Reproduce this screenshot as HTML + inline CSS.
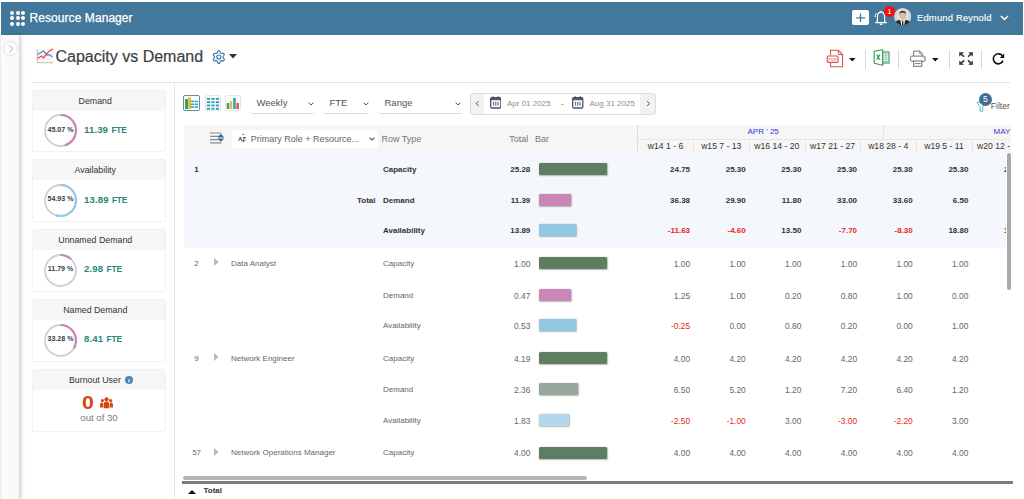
<!DOCTYPE html><html><head><meta charset="utf-8"><style>
*{box-sizing:border-box;margin:0;padding:0}
html,body{width:1024px;height:499px;overflow:hidden;background:#fff;font-family:"Liberation Sans",sans-serif;color:#333}
.a{position:absolute}
.t{position:absolute;white-space:nowrap;line-height:1}
#top{left:1px;top:2px;width:1022px;height:33px;background:#41789b}
#side{left:0;top:35px;width:19px;height:464px;background:#fafafa;border-left:1px solid #ececec;box-shadow:1.5px 0 4px rgba(0,0,0,.2)}
.card{position:absolute;left:33px;width:132px;height:60.5px;background:#fff;box-shadow:0 0 1.5px rgba(0,0,0,.2)}
.card .hd{position:absolute;left:0;top:0;width:100%;height:20px;background:#f6f6f6;font-size:8.8px;color:#333;text-align:center;line-height:21px;padding-right:7.5px}
.ring{position:absolute;left:11px;top:23.8px;width:33px;height:33px}
.pct{position:absolute;left:11px;top:36.1px;width:33px;text-align:center;font-size:7.1px;font-weight:700;color:#3a3a3a;line-height:1;white-space:nowrap}
.big{position:absolute;left:51px;top:34.2px;font-size:9.6px;font-weight:700;color:#2a8676;line-height:1;white-space:nowrap;letter-spacing:.12px}
.big small{font-size:8.4px;margin-left:3.3px;letter-spacing:-.15px}
.dd{position:absolute;height:20px;border-bottom:1px solid #e2d6d8;border-radius:0 0 3px 3px;font-size:10px;color:#555;line-height:20px}
.num{font-size:8px;color:#666}
</style></head><body>
<div id="top" class="a"></div>
<div class="a" style="left:10.0px;top:10.6px;width:4.2px;height:4.2px;border-radius:50%;background:#fff"></div>
<div class="a" style="left:15.6px;top:10.6px;width:4.2px;height:4.2px;border-radius:50%;background:#fff"></div>
<div class="a" style="left:21.2px;top:10.6px;width:4.2px;height:4.2px;border-radius:50%;background:#fff"></div>
<div class="a" style="left:10.0px;top:16.2px;width:4.2px;height:4.2px;border-radius:50%;background:#fff"></div>
<div class="a" style="left:15.6px;top:16.2px;width:4.2px;height:4.2px;border-radius:50%;background:#fff"></div>
<div class="a" style="left:21.2px;top:16.2px;width:4.2px;height:4.2px;border-radius:50%;background:#fff"></div>
<div class="a" style="left:10.0px;top:21.8px;width:4.2px;height:4.2px;border-radius:50%;background:#fff"></div>
<div class="a" style="left:15.6px;top:21.8px;width:4.2px;height:4.2px;border-radius:50%;background:#fff"></div>
<div class="a" style="left:21.2px;top:21.8px;width:4.2px;height:4.2px;border-radius:50%;background:#fff"></div>
<div class="t" style="left:29.5px;top:12.4px;font-size:12px;color:#fff;letter-spacing:.07px;-webkit-text-stroke:.25px #fff">Resource Manager</div>
<div class="a" style="left:852px;top:9.6px;width:17px;height:15.5px;background:#fff;border-radius:2px"></div>
<svg class="a" style="left:852px;top:9.6px" width="17" height="16"><path d="M8.5 3.6v8.5M4.2 7.8h8.9" stroke="#41789b" stroke-width="1.3"/></svg>
<svg class="a" style="left:872.5px;top:9.5px" width="16" height="16" viewBox="0 0 16 16"><path d="M4.4 12V7.4C4.4 4.2 6 2.2 8 2.2S11.6 4.2 11.6 7.4V12L13.4 12.6H2.6z" fill="none" stroke="#fff" stroke-width="1.2" stroke-linejoin="round"/><path d="M7 13.4a1 1 0 0 0 2 0" fill="none" stroke="#fff" stroke-width="1.1"/><path d="M8 .8v1.4" stroke="#fff" stroke-width="1.1"/><path d="M2 7Q2.1 4.6 3.4 3" stroke="#fff" stroke-width="1" fill="none"/></svg>
<div class="a" style="left:883.8px;top:5.9px;width:11.2px;height:11.2px;border-radius:50%;background:#f80d16"></div>
<div class="t" style="left:884px;top:7.5px;width:11px;text-align:center;font-size:8px;color:#fff">1</div>
<svg class="a" style="left:893.9px;top:8.1px" width="17.4" height="17.4" viewBox="0 0 18 18"><defs><clipPath id="av"><circle cx="9" cy="9" r="9"/></clipPath><radialGradient id="avg" cx=".5" cy=".4" r=".6"><stop offset="0" stop-color="#f2f2f2"/><stop offset="1" stop-color="#c8c8c8"/></radialGradient></defs><g clip-path="url(#av)"><rect width="18" height="18" fill="url(#avg)"/><path d="M5.8 7.5Q5.6 11 9 12q3.4-1 3.2-4.5z" fill="#d9b8a8"/><ellipse cx="9" cy="7.6" rx="3.2" ry="3.9" fill="#dcbcad"/><path d="M5.6 7Q5.2 2.9 9 2.8q3.8.1 3.4 4.2q-.4-2.2-3.4-2.3q-3 .1-3.4 2.3z" fill="#3c3634"/><path d="M0 18q.6-4.6 4.8-5.6L9 13.4l4.2-1Q17.4 13.4 18 18z" fill="#26272b"/><path d="M6.6 12.3L9 13.2l2.4-.9L10.6 18H7.4z" fill="#f6f6f6"/><path d="M8.5 13.3h1l.4 4.7H8.1z" fill="#1a1a1a"/></g></svg>
<div class="t" style="left:917px;top:13.1px;font-size:9.4px;color:#fff;letter-spacing:0.2px;-webkit-text-stroke:.15px #fff">Edmund Reynold</div>
<svg class="a" style="left:1000px;top:14.5px" width="9" height="6"><path d="M1 1l3.5 3.5L8 1" fill="none" stroke="#fff" stroke-width="1.5"/></svg>
<div id="side" class="a"></div>
<div class="a" style="left:3.6px;top:41.8px;width:13.6px;height:13.6px;border-radius:50%;background:#fdfdfd;box-shadow:0 0 2px rgba(0,0,0,.25)"></div>
<svg class="a" style="left:3.6px;top:41.8px" width="14" height="14"><path d="M5.4 3.2l3.4 3.6-3.4 3.6" fill="none" stroke="#a4adb8" stroke-width="1"/></svg>
<svg class="a" style="left:36px;top:48px" width="18" height="16" viewBox="0 0 18 16"><rect x="1" y="1" width="16" height="14" fill="#fbecec" opacity=".5"/><path d="M1.3 1v13.6H17" fill="none" stroke="#c9c9c9" stroke-width="1.2"/><path d="M1.5 6.5L7.5 3 11 7l2.5-.3L16.5 9" fill="none" stroke="#4a8bd6" stroke-width="1.2"/><path d="M1.5 10.5L5.5 8 7.5 10 13 3.2 17 1" fill="none" stroke="#e8484a" stroke-width="1.2"/></svg>
<div class="t" style="left:55.5px;top:48.8px;font-size:16px;color:#3a3f44;-webkit-text-stroke:.2px #3a3f44">Capacity vs Demand</div>
<svg class="a" style="left:211.8px;top:49.6px" width="13.6" height="14.2" viewBox="0 0 24 24" preserveAspectRatio="none"><path d="M8.87 5.29 L10.52 1.50 L13.48 1.50 L15.13 5.29 L16.24 5.94 L20.35 5.47 L21.83 8.03 L19.37 11.36 L19.37 12.64 L21.83 15.97 L20.35 18.53 L16.24 18.06 L15.13 18.71 L13.48 22.50 L10.52 22.50 L8.87 18.71 L7.76 18.06 L3.65 18.53 L2.17 15.97 L4.63 12.64 L4.63 11.36 L2.17 8.03 L3.65 5.47 L7.76 5.94z" fill="none" stroke="#3b7cab" stroke-width="2" stroke-linejoin="round"/><circle cx="12" cy="12" r="3.5" fill="none" stroke="#3b7cab" stroke-width="2"/></svg>
<svg class="a" style="left:229px;top:53.5px" width="8" height="5"><path d="M0 0h8L4 4.5z" fill="#333"/></svg>
<svg class="a" style="left:826px;top:49px" width="18" height="19" viewBox="0 0 18 19"><path d="M4.5 6.5V1.3h7.8l4.3 4.3v12.2H4.5v-4.2" fill="none" stroke="#d9534f" stroke-width="1.1"/><path d="M12.3 1.3v4.3h4.3" fill="none" stroke="#d9534f" stroke-width="1"/><rect x="1.2" y="7" width="10.8" height="6.4" rx="1" fill="#fff" stroke="#d9534f" stroke-width="1.1"/><text x="6.6" y="11.8" font-size="4.2" font-family="Liberation Sans" fill="#d9534f" text-anchor="middle" letter-spacing=".1">PDF</text></svg>
<svg class="a" style="left:849.2px;top:57.8px" width="8" height="5"><path d="M0 0h6.6L3.3 3.4z" fill="#111"/></svg>
<div class="a" style="left:865px;top:50px;width:1px;height:19px;background:#d8d8d8"></div>
<svg class="a" style="left:872.5px;top:49.3px" width="18" height="17" viewBox="0 0 18 17"><path d="M1.2 2.2L9.8 .8v15.4L1.2 14.2z" fill="#fff" stroke="#2f9a5a" stroke-width="1.1" stroke-linejoin="round"/><rect x="9.8" y="3" width="6.2" height="11" fill="#fff" stroke="#2f9a5a" stroke-width="1.1"/><path d="M9.8 4.9h6.2M9.8 6.8h6.2M9.8 8.7h6.2M9.8 10.6h6.2M9.8 12.5h6.2M12.9 3v11" stroke="#7cc49a" stroke-width=".7"/><path d="M3.8 5.6l3 5.2M6.8 5.6l-3 5.2" stroke="#2f9a5a" stroke-width="1.2"/></svg>
<div class="a" style="left:898px;top:50px;width:1px;height:19px;background:#d8d8d8"></div>
<svg class="a" style="left:909px;top:49.5px" width="18" height="17" viewBox="0 0 18 17"><path d="M4.7 6V1.1h6l2.6 2.6V6" fill="#fff" stroke="#707070" stroke-width="1"/><path d="M10.7 1.1v2.6h2.6" fill="none" stroke="#707070" stroke-width=".8"/><rect x="1.6" y="6.1" width="14.4" height="5.3" rx="1.2" fill="#fff" stroke="#707070" stroke-width="1"/><rect x="4.7" y="11" width="8.1" height="5.3" fill="#fff" stroke="#707070" stroke-width="1"/><path d="M6 13.6h5.5" stroke="#777" stroke-width="1"/><path d="M13.6 7.6h1" stroke="#aaa" stroke-width=".8"/></svg>
<svg class="a" style="left:932px;top:57.8px" width="8" height="5"><path d="M0 0h6.6L3.3 3.4z" fill="#111"/></svg>
<div class="a" style="left:948.5px;top:50px;width:1px;height:19px;background:#d8d8d8"></div>
<svg class="a" style="left:958.7px;top:51.8px" width="14.2" height="13.2" viewBox="0 0 14.4 14.4" preserveAspectRatio="none"><g fill="#3a3a3a" stroke="#3a3a3a"><path d="M.5.5h4L.5 4.5z" stroke-width=".6"/><path d="M2 2l3.2 3.2" stroke-width="1.7"/><path d="M13.9.5h-4l4 4z" stroke-width=".6"/><path d="M12.4 2L9.2 5.2" stroke-width="1.7"/><path d="M.5 13.9h4l-4-4z" stroke-width=".6"/><path d="M2 12.4l3.2-3.2" stroke-width="1.7"/><path d="M13.9 13.9h-4l4-4z" stroke-width=".6"/><path d="M12.4 12.4L9.2 9.2" stroke-width="1.7"/></g></svg>
<div class="a" style="left:981px;top:50px;width:1px;height:19px;background:#d8d8d8"></div>
<svg class="a" style="left:991.5px;top:51.6px" width="13" height="13" viewBox="0 0 13 13"><path d="M10.6 4.2A5 5 0 1 0 11 8.6" fill="none" stroke="#111" stroke-width="1.6"/><path d="M12.2 1.6V6H7.8z" fill="#111"/></svg>
<div class="a" style="left:32px;top:82px;width:977.5px;height:1px;background:#e4e4e4"></div>
<div class="a" style="left:174px;top:83px;width:1px;height:416px;background:#e6e6e6"></div>
<div class="card" style="top:90.5px"><div class="hd">Demand</div><svg class="ring" viewBox="0 0 33 33"><circle cx="16.5" cy="16.5" r="15.5" fill="none" stroke="#cfcfcf" stroke-width="1.8"/><circle cx="16.5" cy="16.5" r="15.5" fill="none" stroke="#c986b9" stroke-width="2.2" stroke-dasharray="43.89 97.39" transform="rotate(-90 16.5 16.5)"/></svg><div class="pct">45.07 %</div><div class="big">11.39<small>FTE</small></div></div>
<div class="card" style="top:160.4px"><div class="hd">Availability</div><svg class="ring" viewBox="0 0 33 33"><circle cx="16.5" cy="16.5" r="15.5" fill="none" stroke="#cfcfcf" stroke-width="1.8"/><circle cx="16.5" cy="16.5" r="15.5" fill="none" stroke="#95c8e3" stroke-width="2.2" stroke-dasharray="53.50 97.39" transform="rotate(-90 16.5 16.5)"/></svg><div class="pct">54.93 %</div><div class="big">13.89<small>FTE</small></div></div>
<div class="card" style="top:230.3px"><div class="hd">Unnamed Demand</div><svg class="ring" viewBox="0 0 33 33"><circle cx="16.5" cy="16.5" r="15.5" fill="none" stroke="#cfcfcf" stroke-width="1.8"/><circle cx="16.5" cy="16.5" r="15.5" fill="none" stroke="#c986b9" stroke-width="2.2" stroke-dasharray="11.48 97.39" transform="rotate(-90 16.5 16.5)"/></svg><div class="pct">11.79 %</div><div class="big">2.98<small>FTE</small></div></div>
<div class="card" style="top:300.2px"><div class="hd">Named Demand</div><svg class="ring" viewBox="0 0 33 33"><circle cx="16.5" cy="16.5" r="15.5" fill="none" stroke="#cfcfcf" stroke-width="1.8"/><circle cx="16.5" cy="16.5" r="15.5" fill="none" stroke="#c986b9" stroke-width="2.2" stroke-dasharray="32.41 97.39" transform="rotate(-90 16.5 16.5)"/></svg><div class="pct">33.28 %</div><div class="big">8.41<small>FTE</small></div></div>
<div class="card" style="top:370px"><div class="hd" style="padding:0"></div><div class="t" style="left:36px;top:5.8px;font-size:8.8px;color:#333">Burnout User</div><svg class="a" style="left:92px;top:5.5px" width="8" height="8" viewBox="0 0 8 8"><circle cx="4" cy="4" r="4" fill="#4a86b5"/><path d="M4.3 3.3L3.6 6.3M4.5 1.9v.3" stroke="#fff" stroke-width="1.1"/></svg><div class="t" style="left:49px;top:23.1px;font-size:19px;font-weight:700;color:#d4470f;transform:scaleX(1.12);transform-origin:left">0</div><svg class="a" style="left:66.8px;top:27px" width="13" height="11.5" viewBox="0 0 13 11.5"><g fill="#d4470f"><circle cx="6.5" cy="2.3" r="2.1"/><path d="M3.6 11.2V7.4a2.9 2.9 0 0 1 5.8 0v3.8z"/><circle cx="2.4" cy="3.6" r="1.6"/><path d="M0 10.6V7.6A2.2 2.2 0 0 1 2.6 5.6Q3 6.3 3 7.4v3.2z"/><circle cx="10.6" cy="3.6" r="1.6"/><path d="M13 10.6V7.6a2.2 2.2 0 0 0-2.6-2Q10 6.3 10 7.4v3.2z"/></g></svg><div class="t" style="left:0;top:42.7px;width:132px;text-align:center;font-size:9.6px;color:#7a7a7a">out of 30</div></div>
<div class="a" style="left:183px;top:95px;width:17px;height:16px;border:1.3px solid #5a8db0;border-radius:2px;background:#fff"></div>
<svg class="a" style="left:183px;top:95px" width="17" height="16" viewBox="0 0 17 16"><rect x="2" y="4" width="3" height="10" fill="#43a05a"/><rect x="5" y="2.4" width="3" height="11.6" fill="#f3bd3a"/><g fill="#35a8be"><rect x="7.6" y="5.6" width="3.4" height="1.6"/><rect x="11.6" y="5.6" width="3.4" height="1.6"/><rect x="7.6" y="8.5" width="3.4" height="1.6"/><rect x="11.6" y="8.5" width="3.4" height="1.6"/><rect x="7.6" y="11.3" width="3.4" height="1.6"/><rect x="11.6" y="11.3" width="3.4" height="1.6"/></g></svg>
<div class="a" style="left:204.5px;top:95px;width:16px;height:16px;border:1px solid #e6e6e6;border-radius:2px;background:#fff"></div>
<svg class="a" style="left:204.5px;top:95px" width="16" height="16" viewBox="0 0 16 16"><g fill="#2ea3b8"><rect x="1.8" y="2.9" width="3.3" height="1.9"/><rect x="6.3" y="2.9" width="3.3" height="1.9"/><rect x="10.8" y="2.9" width="3.3" height="1.9"/><rect x="1.8" y="6.2" width="3.3" height="1.9"/><rect x="6.3" y="6.2" width="3.3" height="1.9"/><rect x="10.8" y="6.2" width="3.3" height="1.9"/><rect x="1.8" y="9.5" width="3.3" height="1.9"/><rect x="6.3" y="9.5" width="3.3" height="1.9"/><rect x="10.8" y="9.5" width="3.3" height="1.9"/><rect x="1.8" y="12.8" width="3.3" height="1.9"/><rect x="6.3" y="12.8" width="3.3" height="1.9"/><rect x="10.8" y="12.8" width="3.3" height="1.9"/></g></svg>
<div class="a" style="left:225px;top:95px;width:16px;height:16px;border:1px solid #e6e6e6;border-radius:2px;background:#fff"></div>
<svg class="a" style="left:225px;top:95px" width="16" height="16" viewBox="0 0 16 16"><rect x="1.8" y="8" width="2.5" height="6" fill="#43a05a"/><rect x="4.8" y="6" width="2.5" height="8" fill="#f3bd3a"/><rect x="8.1" y="2.9" width="2.7" height="11.1" fill="#35a8be"/><rect x="11.4" y="7.9" width="2.6" height="6.1" fill="#e4574f"/></svg>
<div class="dd" style="left:250px;top:94px;width:64px"></div>
<div class="t" style="left:256.5px;top:98.1px;font-size:9.5px;color:#555">Weekly</div>
<svg class="a" style="left:308px;top:101.8px" width="6" height="4"><path d="M.6.6l2.4 2.4L5.4.6" fill="none" stroke="#555" stroke-width="1"/></svg>
<div class="dd" style="left:323px;top:94px;width:46px"></div>
<div class="t" style="left:329.5px;top:98.1px;font-size:9.5px;color:#555">FTE</div>
<svg class="a" style="left:362.6px;top:101.8px" width="6" height="4"><path d="M.6.6l2.4 2.4L5.4.6" fill="none" stroke="#555" stroke-width="1"/></svg>
<div class="dd" style="left:378px;top:94px;width:85px"></div>
<div class="t" style="left:384.5px;top:98.1px;font-size:9.5px;color:#555">Range</div>
<svg class="a" style="left:454.8px;top:101.8px" width="6" height="4"><path d="M.6.6l2.4 2.4L5.4.6" fill="none" stroke="#555" stroke-width="1"/></svg>
<div class="a" style="left:469.5px;top:93px;width:186px;height:22px;border:1px solid #dcdcdc;border-radius:3px;background:#f2f2f2"></div>
<div class="a" style="left:484px;top:94px;width:156.4px;height:20px;background:#fff"></div>
<svg class="a" style="left:475px;top:100px" width="5" height="7"><path d="M3.6 1.2L1.2 3.6l2.4 2.4" fill="none" stroke="#3d4a5c" stroke-width="1"/></svg>
<svg class="a" style="left:645.5px;top:100px" width="5" height="7"><path d="M1.2 1.2l2.4 2.4L1.2 6" fill="none" stroke="#3d4a5c" stroke-width="1"/></svg>
<svg class="a" style="left:489.5px;top:96.4px" width="11.5" height="12.5" viewBox="0 0 11.5 12.5"><rect x=".7" y="1.6" width="10.1" height="10.4" rx="1.3" fill="#fff" stroke="#4b5563" stroke-width="1.3"/><rect x=".7" y="1.6" width="10.1" height="2.6" fill="#4b5563"/><path d="M3.2 .3v2.3M8.3 .3v2.3" stroke="#4b5563" stroke-width="1.2"/><g fill="#6b7280"><rect x="2.9" y="5.8" width="1.2" height="3.8"/><rect x="5.15" y="5.8" width="1.2" height="3.8"/><rect x="7.4" y="5.8" width="1.2" height="3.8"/></g></svg>
<svg class="a" style="left:572px;top:96.4px" width="11.5" height="12.5" viewBox="0 0 11.5 12.5"><rect x=".7" y="1.6" width="10.1" height="10.4" rx="1.3" fill="#fff" stroke="#4b5563" stroke-width="1.3"/><rect x=".7" y="1.6" width="10.1" height="2.6" fill="#4b5563"/><path d="M3.2 .3v2.3M8.3 .3v2.3" stroke="#4b5563" stroke-width="1.2"/><g fill="#6b7280"><rect x="2.9" y="5.8" width="1.2" height="3.8"/><rect x="5.15" y="5.8" width="1.2" height="3.8"/><rect x="7.4" y="5.8" width="1.2" height="3.8"/></g></svg>
<div class="t" style="left:507px;top:99.5px;font-size:8px;color:#8d8d8d">Apr 01 2025</div>
<div class="t" style="left:561px;top:99.5px;font-size:8px;font-weight:700;color:#999">-</div>
<div class="t" style="left:589.5px;top:99.5px;font-size:8px;color:#8d8d8d">Aug 31 2025</div>
<svg class="a" style="left:976px;top:101px" width="11" height="11" viewBox="0 0 11 11"><path d="M1 1.2h9L6.7 6v4.3H4.1V6z" fill="#fff" stroke="#5cc2c4" stroke-width="1"/></svg>
<div class="a" style="left:979px;top:92.6px;width:13px;height:13px;border-radius:50%;background:#3d6f94"></div>
<div class="t" style="left:979px;top:95px;width:13px;text-align:center;font-size:8.6px;font-weight:400;color:#fff">5</div>
<div class="t" style="left:990.8px;top:101.6px;font-size:8.6px;color:#555">Filter</div>
<div class="a" style="left:184px;top:125px;width:827px;height:27px;background:#f6f6f6"></div>
<svg class="a" style="left:209px;top:131px" width="17" height="13" viewBox="0 0 17 13"><path d="M1 2h11.5M1 5.3h11.5M1 8.6h11.5M1 11.9h11.5" stroke="#8a8a8a" stroke-width="1.2"/><path d="M11.9 2.8L8.6 6.4h6.6z" fill="#2f6a9a"/><path d="M11.9 10.8L8.6 7.4h6.6z" fill="#2f6a9a"/></svg>
<div class="a" style="left:232px;top:130px;width:146px;height:18px;background:#fff;border-radius:2px"></div>
<svg class="a" style="left:237.5px;top:132.5px" width="10" height="10" viewBox="0 0 10 10"><text x="0.3" y="7.6" font-size="5.6" font-family="Liberation Sans" font-weight="700" fill="#333">A</text><text x="4.4" y="7.6" font-size="5.6" font-family="Liberation Sans" font-weight="700" fill="#333">Z</text><path d="M5.2 .4l1.1 1.3H4.1z" fill="#333"/><path d="M5.2 9.6l1.1-1.3H4.1z" fill="#333"/></svg>
<div class="t" style="left:250.8px;top:135px;font-size:9px;color:#666">Primary Role + Resource...</div>
<svg class="a" style="left:368.5px;top:137px" width="6" height="4"><path d="M.6.6l2.4 2.4L5.4.6" fill="none" stroke="#555" stroke-width="1.1"/></svg>
<div class="t" style="left:381.5px;top:135px;font-size:9px;color:#777">Row Type</div>
<div class="t" style="left:509.3px;top:135px;font-size:9px;color:#777">Total</div>
<div class="t" style="left:535px;top:135px;font-size:9px;color:#777">Bar</div>
<div class="a" style="left:637px;top:125px;width:1px;height:27px;background:#dedede"></div>
<div class="a" style="left:638px;top:138.5px;width:373px;height:1px;background:#e6e6e6"></div>
<div class="a" style="left:883px;top:125px;width:1px;height:14px;background:#e6e6e6"></div>
<div class="t" style="left:747.5px;top:127.5px;font-size:8px;color:#3434e0">APR &#39; 25</div>
<div class="t" style="left:993.5px;top:127.5px;font-size:8px;color:#3434e0">MAY</div>
<div class="a" style="left:638px;top:139px;width:373px;height:13px;overflow:hidden">
<div class="t" style="left:-0.3px;top:2.7px;width:55.67px;text-align:center;font-size:8.6px;color:#333">w14 1 - 6</div>
<div class="a" style="left:55.4px;top:0;width:1px;height:13px;background:#e6e6e6"></div>
<div class="t" style="left:55.4px;top:2.7px;width:55.67px;text-align:center;font-size:8.6px;color:#333">w15 7 - 13</div>
<div class="a" style="left:111.0px;top:0;width:1px;height:13px;background:#e6e6e6"></div>
<div class="t" style="left:111.0px;top:2.7px;width:55.67px;text-align:center;font-size:8.6px;color:#333">w16 14 - 20</div>
<div class="a" style="left:166.7px;top:0;width:1px;height:13px;background:#e6e6e6"></div>
<div class="t" style="left:166.7px;top:2.7px;width:55.67px;text-align:center;font-size:8.6px;color:#333">w17 21 - 27</div>
<div class="a" style="left:222.4px;top:0;width:1px;height:13px;background:#e6e6e6"></div>
<div class="t" style="left:222.4px;top:2.7px;width:55.67px;text-align:center;font-size:8.6px;color:#333">w18 28 - 4</div>
<div class="a" style="left:278.1px;top:0;width:1px;height:13px;background:#e6e6e6"></div>
<div class="t" style="left:278.1px;top:2.7px;width:55.67px;text-align:center;font-size:8.6px;color:#333">w19 5 - 11</div>
<div class="a" style="left:333.7px;top:0;width:1px;height:13px;background:#e6e6e6"></div>
<div class="t" style="left:333.7px;top:2.7px;width:55.67px;text-align:center;font-size:8.6px;color:#333">w20 12 - 18</div>
</div>
<div class="a" style="left:184px;top:152px;width:822px;height:96px;background:#f4f7fb"></div>

<div class="a" style="left:184px;top:152px;width:822px;height:323px;overflow:hidden">
<div class="t" style="left:2.5999999999999943px;top:13.900000000000006px;width:20px;text-align:center;font-size:8px;font-weight:700;color:#333">1</div>
<div class="t" style="left:199px;top:13.900000000000006px;font-size:8px;font-weight:700;color:#333">Capacity</div>
<div class="t" style="left:286px;top:14.099999999999994px;width:60.3px;text-align:right;font-size:8px;font-weight:700;color:#333">25.28</div>
<div class="a" style="left:355px;top:11.400000000000006px;width:68px;height:12px;background:#5e7e61;border-radius:1.5px;box-shadow:.8px .8px 1.5px rgba(0,0,0,.28)"></div>
<div class="t" style="left:453.70000000000005px;top:14.10px;width:52.37px;text-align:right;font-size:8px;font-weight:700;color:#333">24.75</div>
<div class="t" style="left:509.37px;top:14.10px;width:52.37px;text-align:right;font-size:8px;font-weight:700;color:#333">25.30</div>
<div class="t" style="left:565.0400000000001px;top:14.10px;width:52.37px;text-align:right;font-size:8px;font-weight:700;color:#333">25.30</div>
<div class="t" style="left:620.71px;top:14.10px;width:52.37px;text-align:right;font-size:8px;font-weight:700;color:#333">25.30</div>
<div class="t" style="left:676.3800000000001px;top:14.10px;width:52.37px;text-align:right;font-size:8px;font-weight:700;color:#333">25.30</div>
<div class="t" style="left:732.0500000000001px;top:14.10px;width:52.37px;text-align:right;font-size:8px;font-weight:700;color:#333">25.30</div>
<div class="t" style="left:787.72px;top:14.10px;width:52.37px;text-align:right;font-size:8px;font-weight:700;color:#333">25.30</div>
<div class="t" style="left:116px;top:44.900000000000006px;width:75.5px;text-align:right;font-size:8px;font-weight:700;color:#333">Total</div>
<div class="t" style="left:199px;top:44.900000000000006px;font-size:8px;font-weight:700;color:#333">Demand</div>
<div class="t" style="left:286px;top:45.099999999999994px;width:60.3px;text-align:right;font-size:8px;font-weight:700;color:#333">11.39</div>
<div class="a" style="left:355px;top:42.400000000000006px;width:32px;height:12px;background:#c986b9;border-radius:1.5px;box-shadow:.8px .8px 1.5px rgba(0,0,0,.28)"></div>
<div class="t" style="left:453.70000000000005px;top:45.10px;width:52.37px;text-align:right;font-size:8px;font-weight:700;color:#333">36.38</div>
<div class="t" style="left:509.37px;top:45.10px;width:52.37px;text-align:right;font-size:8px;font-weight:700;color:#333">29.90</div>
<div class="t" style="left:565.0400000000001px;top:45.10px;width:52.37px;text-align:right;font-size:8px;font-weight:700;color:#333">11.80</div>
<div class="t" style="left:620.71px;top:45.10px;width:52.37px;text-align:right;font-size:8px;font-weight:700;color:#333">33.00</div>
<div class="t" style="left:676.3800000000001px;top:45.10px;width:52.37px;text-align:right;font-size:8px;font-weight:700;color:#333">33.60</div>
<div class="t" style="left:732.0500000000001px;top:45.10px;width:52.37px;text-align:right;font-size:8px;font-weight:700;color:#333">6.50</div>
<div class="t" style="left:199px;top:74.9px;font-size:8px;font-weight:700;color:#333">Availability</div>
<div class="t" style="left:286px;top:75.1px;width:60.3px;text-align:right;font-size:8px;font-weight:700;color:#333">13.89</div>
<div class="a" style="left:355px;top:72.4px;width:37px;height:12px;background:#93c7e3;border-radius:1.5px;box-shadow:.8px .8px 1.5px rgba(0,0,0,.28)"></div>
<div class="t" style="left:453.70000000000005px;top:75.10px;width:52.37px;text-align:right;font-size:8px;font-weight:700;color:#ee2424">-11.63</div>
<div class="t" style="left:509.37px;top:75.10px;width:52.37px;text-align:right;font-size:8px;font-weight:700;color:#ee2424">-4.60</div>
<div class="t" style="left:565.0400000000001px;top:75.10px;width:52.37px;text-align:right;font-size:8px;font-weight:700;color:#333">13.50</div>
<div class="t" style="left:620.71px;top:75.10px;width:52.37px;text-align:right;font-size:8px;font-weight:700;color:#ee2424">-7.70</div>
<div class="t" style="left:676.3800000000001px;top:75.10px;width:52.37px;text-align:right;font-size:8px;font-weight:700;color:#ee2424">-8.30</div>
<div class="t" style="left:732.0500000000001px;top:75.10px;width:52.37px;text-align:right;font-size:8px;font-weight:700;color:#333">18.80</div>
<div class="t" style="left:787.72px;top:75.10px;width:52.37px;text-align:right;font-size:8px;font-weight:700;color:#333">18.80</div>
<div class="t" style="left:2.5999999999999943px;top:107.89999999999998px;width:20px;text-align:center;font-size:8px;font-weight:400;color:#666">2</div>
<svg class="a" style="left:30px;top:106px" width="5" height="8"><path d="M0 0l4.7 4L0 8z" fill="#b9b9b9"/></svg>
<div class="t" style="left:47px;top:107.89999999999998px;font-size:8px;color:#666">Data Analyst</div>
<div class="t" style="left:199px;top:107.89999999999998px;font-size:8px;font-weight:400;color:#666">Capacity</div>
<div class="t" style="left:286px;top:107.80000000000003px;width:60.3px;text-align:right;font-size:8.4px;font-weight:400;color:#666">1.00</div>
<div class="a" style="left:355px;top:105.39999999999998px;width:68px;height:12px;background:#5e7e61;border-radius:1.5px;box-shadow:.8px .8px 1.5px rgba(0,0,0,.28)"></div>
<div class="t" style="left:453.70000000000005px;top:107.80px;width:52.37px;text-align:right;font-size:8.4px;font-weight:400;color:#666">1.00</div>
<div class="t" style="left:509.37px;top:107.80px;width:52.37px;text-align:right;font-size:8.4px;font-weight:400;color:#666">1.00</div>
<div class="t" style="left:565.0400000000001px;top:107.80px;width:52.37px;text-align:right;font-size:8.4px;font-weight:400;color:#666">1.00</div>
<div class="t" style="left:620.71px;top:107.80px;width:52.37px;text-align:right;font-size:8.4px;font-weight:400;color:#666">1.00</div>
<div class="t" style="left:676.3800000000001px;top:107.80px;width:52.37px;text-align:right;font-size:8.4px;font-weight:400;color:#666">1.00</div>
<div class="t" style="left:732.0500000000001px;top:107.80px;width:52.37px;text-align:right;font-size:8.4px;font-weight:400;color:#666">1.00</div>
<div class="t" style="left:199px;top:139.89999999999998px;font-size:8px;font-weight:400;color:#666">Demand</div>
<div class="t" style="left:286px;top:139.8px;width:60.3px;text-align:right;font-size:8.4px;font-weight:400;color:#666">0.47</div>
<div class="a" style="left:355px;top:137.39999999999998px;width:32px;height:12px;background:#c986b9;border-radius:1.5px;box-shadow:.8px .8px 1.5px rgba(0,0,0,.28)"></div>
<div class="t" style="left:453.70000000000005px;top:139.80px;width:52.37px;text-align:right;font-size:8.4px;font-weight:400;color:#666">1.25</div>
<div class="t" style="left:509.37px;top:139.80px;width:52.37px;text-align:right;font-size:8.4px;font-weight:400;color:#666">1.00</div>
<div class="t" style="left:565.0400000000001px;top:139.80px;width:52.37px;text-align:right;font-size:8.4px;font-weight:400;color:#666">0.20</div>
<div class="t" style="left:620.71px;top:139.80px;width:52.37px;text-align:right;font-size:8.4px;font-weight:400;color:#666">0.80</div>
<div class="t" style="left:676.3800000000001px;top:139.80px;width:52.37px;text-align:right;font-size:8.4px;font-weight:400;color:#666">1.00</div>
<div class="t" style="left:732.0500000000001px;top:139.80px;width:52.37px;text-align:right;font-size:8.4px;font-weight:400;color:#666">0.00</div>
<div class="t" style="left:199px;top:169.89999999999998px;font-size:8px;font-weight:400;color:#666">Availability</div>
<div class="t" style="left:286px;top:169.8px;width:60.3px;text-align:right;font-size:8.4px;font-weight:400;color:#666">0.53</div>
<div class="a" style="left:355px;top:167.39999999999998px;width:37px;height:12px;background:#93c7e3;border-radius:1.5px;box-shadow:.8px .8px 1.5px rgba(0,0,0,.28)"></div>
<div class="t" style="left:453.70000000000005px;top:169.80px;width:52.37px;text-align:right;font-size:8.4px;font-weight:400;color:#ee2424">-0.25</div>
<div class="t" style="left:509.37px;top:169.80px;width:52.37px;text-align:right;font-size:8.4px;font-weight:400;color:#666">0.00</div>
<div class="t" style="left:565.0400000000001px;top:169.80px;width:52.37px;text-align:right;font-size:8.4px;font-weight:400;color:#666">0.80</div>
<div class="t" style="left:620.71px;top:169.80px;width:52.37px;text-align:right;font-size:8.4px;font-weight:400;color:#666">0.20</div>
<div class="t" style="left:676.3800000000001px;top:169.80px;width:52.37px;text-align:right;font-size:8.4px;font-weight:400;color:#666">0.00</div>
<div class="t" style="left:732.0500000000001px;top:169.80px;width:52.37px;text-align:right;font-size:8.4px;font-weight:400;color:#666">1.00</div>
<div class="t" style="left:2.5999999999999943px;top:202.89999999999998px;width:20px;text-align:center;font-size:8px;font-weight:400;color:#666">9</div>
<svg class="a" style="left:30px;top:201px" width="5" height="8"><path d="M0 0l4.7 4L0 8z" fill="#b9b9b9"/></svg>
<div class="t" style="left:47px;top:202.89999999999998px;font-size:8px;color:#666">Network Engineer</div>
<div class="t" style="left:199px;top:202.89999999999998px;font-size:8px;font-weight:400;color:#666">Capacity</div>
<div class="t" style="left:286px;top:202.8px;width:60.3px;text-align:right;font-size:8.4px;font-weight:400;color:#666">4.19</div>
<div class="a" style="left:355px;top:200.39999999999998px;width:68px;height:12px;background:#5e7e61;border-radius:1.5px;box-shadow:.8px .8px 1.5px rgba(0,0,0,.28)"></div>
<div class="t" style="left:453.70000000000005px;top:202.80px;width:52.37px;text-align:right;font-size:8.4px;font-weight:400;color:#666">4.00</div>
<div class="t" style="left:509.37px;top:202.80px;width:52.37px;text-align:right;font-size:8.4px;font-weight:400;color:#666">4.20</div>
<div class="t" style="left:565.0400000000001px;top:202.80px;width:52.37px;text-align:right;font-size:8.4px;font-weight:400;color:#666">4.20</div>
<div class="t" style="left:620.71px;top:202.80px;width:52.37px;text-align:right;font-size:8.4px;font-weight:400;color:#666">4.20</div>
<div class="t" style="left:676.3800000000001px;top:202.80px;width:52.37px;text-align:right;font-size:8.4px;font-weight:400;color:#666">4.20</div>
<div class="t" style="left:732.0500000000001px;top:202.80px;width:52.37px;text-align:right;font-size:8.4px;font-weight:400;color:#666">4.20</div>
<div class="t" style="left:199px;top:233.89999999999998px;font-size:8px;font-weight:400;color:#666">Demand</div>
<div class="t" style="left:286px;top:233.8px;width:60.3px;text-align:right;font-size:8.4px;font-weight:400;color:#666">2.36</div>
<div class="a" style="left:355px;top:231.39999999999998px;width:39px;height:12px;background:#97a89f;border-radius:1.5px;box-shadow:.8px .8px 1.5px rgba(0,0,0,.28)"></div>
<div class="t" style="left:453.70000000000005px;top:233.80px;width:52.37px;text-align:right;font-size:8.4px;font-weight:400;color:#666">6.50</div>
<div class="t" style="left:509.37px;top:233.80px;width:52.37px;text-align:right;font-size:8.4px;font-weight:400;color:#666">5.20</div>
<div class="t" style="left:565.0400000000001px;top:233.80px;width:52.37px;text-align:right;font-size:8.4px;font-weight:400;color:#666">1.20</div>
<div class="t" style="left:620.71px;top:233.80px;width:52.37px;text-align:right;font-size:8.4px;font-weight:400;color:#666">7.20</div>
<div class="t" style="left:676.3800000000001px;top:233.80px;width:52.37px;text-align:right;font-size:8.4px;font-weight:400;color:#666">6.40</div>
<div class="t" style="left:732.0500000000001px;top:233.80px;width:52.37px;text-align:right;font-size:8.4px;font-weight:400;color:#666">1.20</div>
<div class="t" style="left:199px;top:264.9px;font-size:8px;font-weight:400;color:#666">Availability</div>
<div class="t" style="left:286px;top:264.8px;width:60.3px;text-align:right;font-size:8.4px;font-weight:400;color:#666">1.83</div>
<div class="a" style="left:355px;top:262.4px;width:30px;height:12px;background:#b3d8ee;border-radius:1.5px;box-shadow:.8px .8px 1.5px rgba(0,0,0,.28)"></div>
<div class="t" style="left:453.70000000000005px;top:264.80px;width:52.37px;text-align:right;font-size:8.4px;font-weight:400;color:#ee2424">-2.50</div>
<div class="t" style="left:509.37px;top:264.80px;width:52.37px;text-align:right;font-size:8.4px;font-weight:400;color:#ee2424">-1.00</div>
<div class="t" style="left:565.0400000000001px;top:264.80px;width:52.37px;text-align:right;font-size:8.4px;font-weight:400;color:#666">3.00</div>
<div class="t" style="left:620.71px;top:264.80px;width:52.37px;text-align:right;font-size:8.4px;font-weight:400;color:#ee2424">-3.00</div>
<div class="t" style="left:676.3800000000001px;top:264.80px;width:52.37px;text-align:right;font-size:8.4px;font-weight:400;color:#ee2424">-2.20</div>
<div class="t" style="left:732.0500000000001px;top:264.80px;width:52.37px;text-align:right;font-size:8.4px;font-weight:400;color:#666">3.00</div>
<div class="t" style="left:2.5999999999999943px;top:297.4px;width:20px;text-align:center;font-size:8px;font-weight:400;color:#666">57</div>
<svg class="a" style="left:30px;top:295.5px" width="5" height="8"><path d="M0 0l4.7 4L0 8z" fill="#b9b9b9"/></svg>
<div class="t" style="left:47px;top:297.4px;font-size:8px;color:#666">Network Operations Manager</div>
<div class="t" style="left:199px;top:297.4px;font-size:8px;font-weight:400;color:#666">Capacity</div>
<div class="t" style="left:286px;top:297.3px;width:60.3px;text-align:right;font-size:8.4px;font-weight:400;color:#666">4.00</div>
<div class="a" style="left:355px;top:294.9px;width:68px;height:12px;background:#5e7e61;border-radius:1.5px;box-shadow:.8px .8px 1.5px rgba(0,0,0,.28)"></div>
<div class="t" style="left:453.70000000000005px;top:297.30px;width:52.37px;text-align:right;font-size:8.4px;font-weight:400;color:#666">4.00</div>
<div class="t" style="left:509.37px;top:297.30px;width:52.37px;text-align:right;font-size:8.4px;font-weight:400;color:#666">4.00</div>
<div class="t" style="left:565.0400000000001px;top:297.30px;width:52.37px;text-align:right;font-size:8.4px;font-weight:400;color:#666">4.00</div>
<div class="t" style="left:620.71px;top:297.30px;width:52.37px;text-align:right;font-size:8.4px;font-weight:400;color:#666">4.00</div>
<div class="t" style="left:676.3800000000001px;top:297.30px;width:52.37px;text-align:right;font-size:8.4px;font-weight:400;color:#666">4.00</div>
<div class="t" style="left:732.0500000000001px;top:297.30px;width:52.37px;text-align:right;font-size:8.4px;font-weight:400;color:#666">4.00</div>
</div>
<div class="a" style="left:1006.5px;top:153px;width:4.5px;height:137px;background:#a9a9a9;border-radius:2px"></div>
<div class="a" style="left:182.5px;top:475.8px;width:404px;height:4.6px;background:#b5b5b5;border-radius:2.3px"></div>
<div class="a" style="left:181.5px;top:480.8px;width:831px;height:3px;background:#7b7b7b"></div>
<svg class="a" style="left:187.5px;top:489.5px" width="8" height="4"><path d="M0 4L4 0l4 4z" fill="#111"/></svg>
<div class="t" style="left:203.5px;top:486.5px;font-size:8px;font-weight:700;color:#333">Total</div>
</body></html>
